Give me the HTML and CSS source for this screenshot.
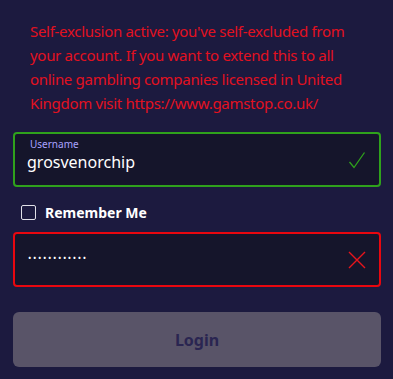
FILE: index.html
```html
<!DOCTYPE html>
<html lang="en">
<head>
    <meta charset="UTF-8">
    <meta name="viewport" content="width=device-width, initial-scale=1.0">
    <title>Login</title>
    <link rel="stylesheet" href="styles.css">
</head>
<body>
    <div class="login">
        <p class="notice">Self-exclusion active: you've self-excluded from your account. If you want to extend this to all online gambling companies licensed in United Kingdom visit https://www.gamstop.co.uk/</p>

        <div class="field valid">
            <div class="field-text">
                <span class="field-label">Username</span>
                <span class="field-value">grosvenorchip</span>
            </div>
            <svg class="field-icon" width="20" height="20" viewBox="0 0 20 20">
                <path d="M2.5 12 L7 17.5 L17.5 2.5" fill="none" stroke="#2fa21c" stroke-width="1.3"/>
            </svg>
        </div>

        <label class="remember">
            <span class="box"></span>
            <span>Remember Me</span>
        </label>

        <div class="field invalid">
            <div class="field-text">
                <span class="field-dots">••••••••••••</span>
            </div>
            <svg class="field-icon" width="20" height="20" viewBox="0 0 20 20">
                <path d="M2 2 L18 18 M18 2 L2 18" fill="none" stroke="#e8141c" stroke-width="1.4"/>
            </svg>
        </div>

        <button class="login-btn">Login</button>
    </div>
</body>
</html>
```

FILE: styles.css
```css
body {
    margin: 0;
    background-color: #1c1a3f;
    font-family: 'Noto Sans', sans-serif;
    color: #fff;
}

.login {
    padding: 0 12px 0 13px;
}

.notice {
    margin: 0;
    padding: 19px 14px 0 17px;
    color: #e3111f;
    font-size: 15px;
    line-height: 24px;
    letter-spacing: -0.3px;
}

.field {
    display: flex;
    align-items: center;
    height: 51px;
    margin-top: 17px;
    padding: 0 12px 0 12px;
    background-color: #15152b;
    border: 2px solid #2fa21c;
    border-radius: 4px;
}

.field.invalid {
    border-color: #e8070f;
}

.field-text {
    flex: 1;
    display: flex;
    flex-direction: column;
    gap: 2px;
    margin-top: -9px;
}

.field-label {
    font-size: 10px;
    line-height: 12px;
    color: #a9a3ff;
    padding-left: 3px;
}

.field-value {
    font-size: 16px;
    line-height: 20px;
}

.field-dots {
    font-size: 9px;
    letter-spacing: 1.6px;
    padding-left: 1px;
    margin-top: 5px;
}

.field-icon {
    flex: none;
}

.remember {
    display: flex;
    align-items: center;
    gap: 9px;
    margin: 16px 0 0 8px;
    font-size: 14px;
    font-weight: 700;
}

.box {
    width: 13px;
    height: 13px;
    border: 1.5px solid #e0e0e8;
    border-radius: 2px;
}

.remember + .field {
    margin-top: 10px;
}

.login-btn {
    display: block;
    width: 100%;
    height: 55px;
    margin-top: 25px;
    border: none;
    border-radius: 6px;
    background-color: #595468;
    color: #2a2551;
    font-family: 'Noto Sans', sans-serif;
    font-size: 16px;
    font-weight: 700;
}
```
